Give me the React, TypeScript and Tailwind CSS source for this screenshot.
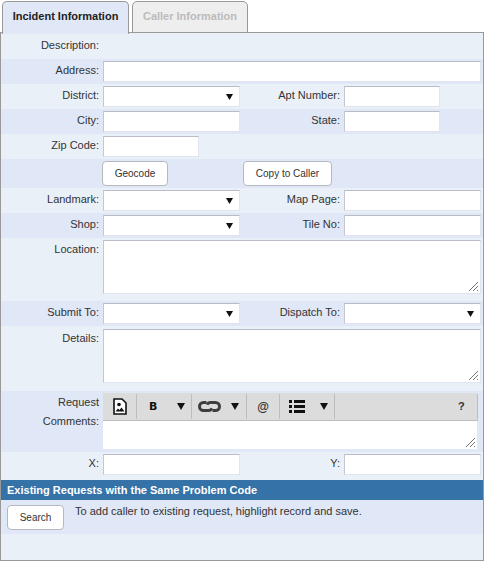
import React from "react";

const inputCls = "h-[21px] bg-white border border-[#e0e4ee] border-t-[#b9bcc6] border-l-[#c4c7d0] shrink-0";

function Label({ text, w = "w-[98px]" }: { text: string; w?: string }) {
  return <div className={`${w} shrink-0 text-right text-[11px] leading-[14px] text-[#333] pb-[4px]`}>{text}</div>;
}

function Arrow({ big }: { big?: boolean }) {
  return big ? (
    <svg width="8" height="7" viewBox="0 0 8 7" className="shrink-0">
      <path d="M0 0H8L4 7Z" fill="#111" />
    </svg>
  ) : (
    <svg width="7" height="6" viewBox="0 0 7 6" className="shrink-0">
      <path d="M0 0H7L3.5 6Z" fill="#111" />
    </svg>
  );
}

function Select({ w = "w-[137px]" }: { w?: string }) {
  return (
    <div className={`${inputCls} ${w} flex items-center justify-end pr-[6px]`}>
      <Arrow />
    </div>
  );
}

function Input({ w = "w-[137px]" }: { w?: string }) {
  return <div className={`${inputCls} ${w}`} />;
}

function Row({ dark, h = "h-[25px]", children }: { dark?: boolean; h?: string; children: React.ReactNode }) {
  return (
    <div className={`${h} flex items-center gap-[4px] shrink-0 ${dark ? "bg-[#e0e7f6]" : "bg-[#e9f0f8]"}`}>{children}</div>
  );
}

function Grip() {
  return (
    <svg width="11" height="11" viewBox="0 0 11 11" className="absolute right-[1px] bottom-[1px]">
      <path d="M1 10L10 1M5 10L10 5M9 10L10 9" stroke="#777" strokeWidth="1" />
    </svg>
  );
}

function TextArea({ h = "h-[54px]", w = "w-[378px]" }: { h?: string; w?: string }) {
  return (
    <div className={`relative ${h} ${w} bg-white border border-[#e0e4ee] border-t-[#b9bcc6] border-l-[#c4c7d0] shrink-0`}>
      <Grip />
    </div>
  );
}

function Btn({ text, w }: { text: string; w: string }) {
  return (
    <div className={`${w} h-[25px] shrink-0 flex items-center justify-center bg-white border border-[#b5b8bf] rounded-[4px] text-[10px] text-[#333]`}>
      {text}
    </div>
  );
}

function Sep() {
  return <div className="w-[1px] h-[25px] bg-[#bdbdbd] shrink-0" />;
}

function Toolbar() {
  return (
    <div className="h-[28px] w-[375px] bg-[#dcdcdc] border-b border-[#bdbdbd] flex items-center">
      <div className="w-[33px] flex justify-center pl-[1px] shrink-0">
        <svg width="14" height="17" viewBox="0 0 14 17">
          <path d="M1 1H9L13 5V16H1Z" fill="#fff" stroke="#111" strokeWidth="1.6" />
          <circle cx="6" cy="6.5" r="1.8" fill="#111" />
          <path d="M2.5 13.5L5 10.5L6.5 12L8.5 9.5L11.5 13.5Z" fill="#111" />
        </svg>
      </div>
      <Sep />
      <div className="w-[54px] flex items-center shrink-0 pl-[12px]">
        <span className="w-[28px] pt-[1px] text-[11px] font-bold text-[#111] font-['DejaVu_Sans']">B</span>
        <Arrow big />
      </div>
      <Sep />
      <div className="w-[54px] flex items-center shrink-0 pl-[6px]">
        <svg width="23" height="11" viewBox="0 0 23 11" className="mr-[10px] shrink-0">
          <path d="M8.5 1.5H5.5a4 4 0 0 0 0 8h5a4 4 0 0 0 3.5-2.2" fill="none" stroke="#3d3d3d" strokeWidth="3" />
          <path d="M14.5 9.5h3a4 4 0 0 0 0-8h-5a4 4 0 0 0-3.5 2.2" fill="none" stroke="#3d3d3d" strokeWidth="3" />
        </svg>
        <Arrow big />
      </div>
      <Sep />
      <div className="w-[32px] pt-[1px] text-center text-[12px] font-bold text-[#333] shrink-0">@</div>
      <Sep />
      <div className="w-[54px] flex items-center shrink-0 pl-[9px]">
        <svg width="16" height="13" viewBox="0 0 16 13" className="mr-[15px] shrink-0">
          <path d="M0 0H3V3H0ZM5 0H16V3H5ZM0 5H3V8H0ZM5 5H16V8H5ZM0 10H3V13H0ZM5 10H16V13H5Z" fill="#111" />
        </svg>
        <Arrow big />
      </div>
      <Sep />
      <div className="flex-1 pl-[123px] text-[11px] font-bold text-[#333]">?</div>
      <Sep />
    </div>
  );
}

export default function App() {
  return (
    <div className="w-[484px] h-[562px] bg-white font-['Liberation_Sans',Arial,sans-serif] flex flex-col overflow-hidden">
      <div className="h-[33px] flex items-end pl-[2px] gap-[3px] shrink-0">
        <div className="w-[127px] h-[33px] pb-[4px] bg-[#e0e7f6] border border-b-0 border-[#999] rounded-t-[5px] flex items-center justify-center text-[11px] font-bold text-[#222] -mb-[1px] z-10 relative">
          Incident Information
        </div>
        <div className="w-[116px] h-[32px] pb-[1px] bg-[#eeeeee] border border-[#999] rounded-t-[5px] flex items-center justify-center text-[11px] font-bold text-[#bbb]">
          Caller Information
        </div>
      </div>
      <div className="w-[484px] h-[529px] border border-[#999] flex flex-col bg-[#e9f0f8] -mt-[1px]">
        <Row h="h-[26px]"><div className="pt-[2px]"><Label text="Description:" /></div></Row>
        <Row dark><Label text="Address:" /><Input w="w-[378px]" /></Row>
        <Row>
          <Label text="District:" /><Select />
          <Label text="Apt Number:" w="w-[96px]" /><Input w="w-[96px]" />
        </Row>
        <Row dark>
          <Label text="City:" /><Input />
          <Label text="State:" w="w-[96px]" /><Input w="w-[96px]" />
        </Row>
        <Row><Label text="Zip Code:" /><Input w="w-[96px]" /></Row>
        <Row dark h="h-[29px]">
          <div className="w-[97px] shrink-0" />
          <Btn text="Geocode" w="w-[66px]" />
          <div className="w-[67px] shrink-0" />
          <Btn text="Copy to Caller" w="w-[89px]" />
        </Row>
        <Row>
          <Label text="Landmark:" /><Select />
          <Label text="Map Page:" w="w-[96px]" /><Input />
        </Row>
        <Row dark>
          <Label text="Shop:" /><Select />
          <Label text="Tile No:" w="w-[96px]" /><Input />
        </Row>
        <div className="h-[63px] shrink-0 flex gap-[4px] pt-[2px]">
          <div className="pt-[2px]"><Label text="Location:" /></div>
          <TextArea />
        </div>
        <Row dark>
          <Label text="Submit To:" /><Select />
          <Label text="Dispatch To:" w="w-[96px]" /><Select />
        </Row>
        <div className="h-[65px] shrink-0 flex gap-[4px] pt-[3px] bg-[#e9f0f8]">
          <div className="pt-[2px]"><Label text="Details:" /></div>
          <TextArea />
        </div>
        <div className="h-[61px] shrink-0 flex gap-[4px] pt-[2px] bg-[#e0e7f6]">
          <div className="w-[98px] shrink-0 text-right text-[11px] leading-[19px] text-[#333]">
            <div>Request</div>
            <div>Comments:</div>
          </div>
          <div className="flex flex-col">
            <Toolbar />
            <div className="w-[374px] relative h-[28px] bg-white"><Grip /></div>
          </div>
        </div>
        <Row>
          <Label text="X:" /><Input />
          <Label text="Y:" w="w-[96px]" /><Input />
        </Row>
        <div className="h-[3px] shrink-0" />
        <div className="h-[20px] shrink-0 bg-[#3572a8] flex items-center pl-[6px] text-[11px] font-bold text-white">
          Existing Requests with the Same Problem Code
        </div>
        <div className="h-[34px] shrink-0 bg-[#e0e7f6] flex items-start pl-[6px] pt-[5px] gap-[11px]">
          <Btn text="Search" w="w-[57px]" />
          <div className="text-[11px] leading-[14px] text-[#333] -mt-[1px]">To add caller to existing request, highlight record and save.</div>
        </div>
      </div>
    </div>
  );
}
